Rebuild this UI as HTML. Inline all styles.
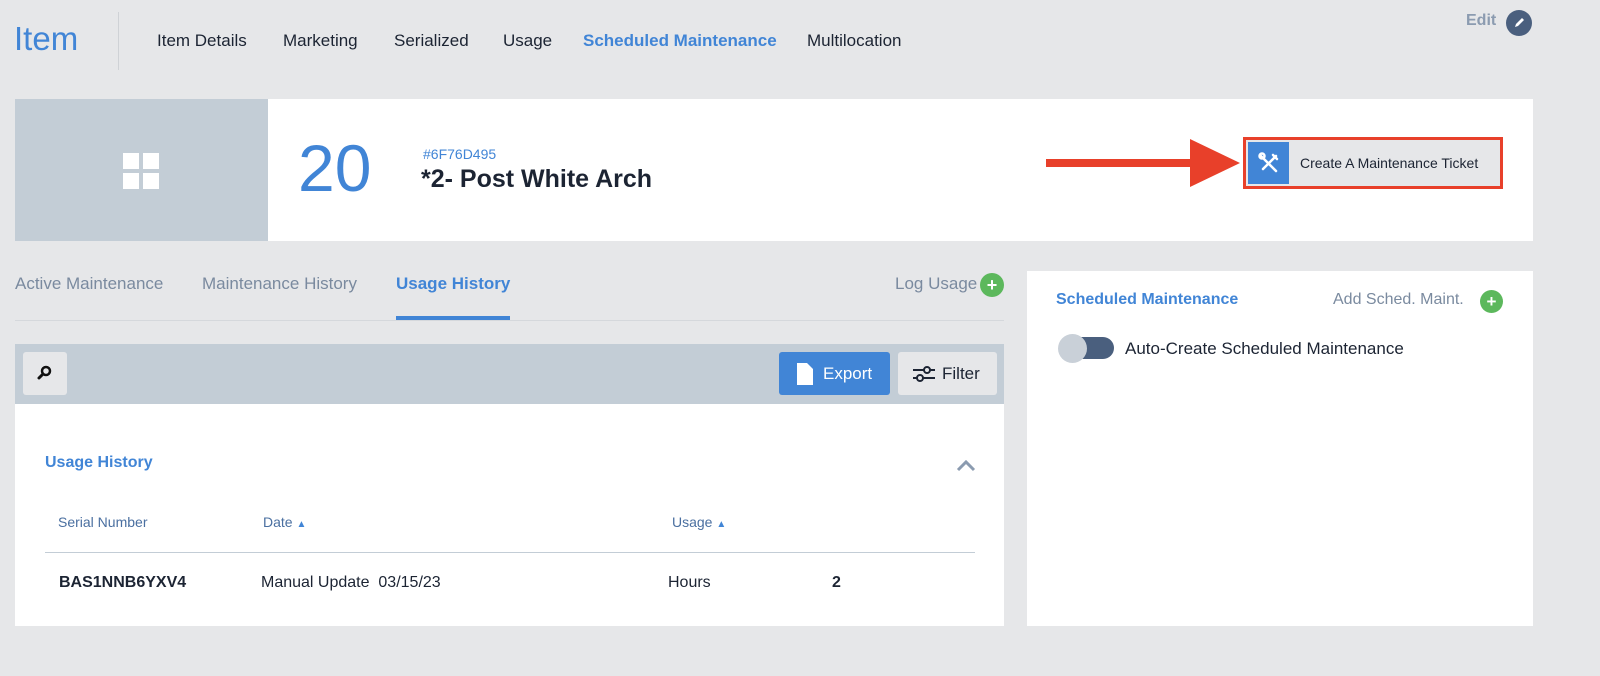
<!DOCTYPE html>
<html><head><style>
*{box-sizing:border-box;margin:0;padding:0}
body{width:1600px;height:676px;background:#e6e7e9;font-family:"Liberation Sans",sans-serif;position:relative;overflow:hidden;color:#1c2433}
.a{position:absolute;white-space:nowrap}
</style></head><body>
<div class="a" style="left:14px;top:20px;font-size:33px;color:#4185d6">Item</div>
<div class="a" style="left:118px;top:12px;width:1px;height:58px;background:#cfd2d6"></div>
<div class="a" style="left:157px;top:31px;font-size:17px">Item Details</div>
<div class="a" style="left:283px;top:31px;font-size:17px">Marketing</div>
<div class="a" style="left:394px;top:31px;font-size:17px">Serialized</div>
<div class="a" style="left:503px;top:31px;font-size:17px">Usage</div>
<div class="a" style="left:583px;top:31px;font-size:17px;color:#4185d6;font-weight:bold">Scheduled Maintenance</div>
<div class="a" style="left:807px;top:31px;font-size:17px">Multilocation</div>
<div class="a" style="left:1466px;top:12px;font-size:16px;color:#8b9bb0;font-weight:bold">Edit</div>
<div class="a" style="left:1506px;top:10px;width:26px;height:26px;border-radius:50%;background:#4a5f7e"><svg width="26" height="26"><path d="M9 17l1-3 6-6 2 2-6 6z" fill="#fff"/></svg></div>

<div class="a" style="left:15px;top:99px;width:1518px;height:142px;background:#fff"></div>
<div class="a" style="left:15px;top:99px;width:253px;height:142px;background:#c3cdd6"></div>
<div class="a" style="left:123px;top:153px;width:16px;height:16px;background:#fff"></div>
<div class="a" style="left:143px;top:153px;width:16px;height:16px;background:#fff"></div>
<div class="a" style="left:123px;top:173px;width:16px;height:16px;background:#fff"></div>
<div class="a" style="left:143px;top:173px;width:16px;height:16px;background:#fff"></div>
<div class="a" style="left:298px;top:130px;font-size:66px;color:#4185d6;line-height:76px">20</div>
<div class="a" style="left:423px;top:146px;font-size:14px;color:#4185d6">#6F76D495</div>
<div class="a" style="left:421px;top:165px;font-size:25px;font-weight:bold">*2- Post White Arch</div>
<div class="a" style="left:1046px;top:159px;width:150px;height:8px;background:#e8402a"></div>
<div class="a" style="left:1190px;top:139px;width:0;height:0;border-top:24px solid transparent;border-bottom:24px solid transparent;border-left:50px solid #e8402a"></div>
<div class="a" style="left:1243px;top:137px;width:260px;height:52px;border:3px solid #e8402a;background:#e6e7e9"></div>
<div class="a" style="left:1248px;top:142px;width:41px;height:42px;background:#4185d6"><svg width="41" height="42"><g stroke="#fff" stroke-width="2.5" stroke-linecap="round" fill="none"><path d="M13 14l15 15"/><path d="M28 14l-13 13"/><circle cx="14" cy="14" r="2.5"/><path d="M25 13l4 4"/></g></svg></div>
<div class="a" style="left:1300px;top:155px;font-size:14px">Create A Maintenance Ticket</div>

<div class="a" style="left:15px;top:274px;font-size:17px;color:#7a8a9f">Active Maintenance</div>
<div class="a" style="left:202px;top:274px;font-size:17px;color:#7a8a9f">Maintenance History</div>
<div class="a" style="left:396px;top:274px;font-size:17px;color:#4185d6;font-weight:bold">Usage History</div>
<div class="a" style="left:396px;top:316px;width:114px;height:4px;background:#4185d6"></div>
<div class="a" style="left:15px;top:320px;width:989px;height:1px;background:#d5d8dc"></div>
<div class="a" style="left:895px;top:274px;font-size:17px;color:#7a8a9f">Log Usage</div>
<div class="a" style="left:980px;top:273px;width:24px;height:24px;border-radius:50%;background:#5cb85c;color:#fff;text-align:center;font-weight:bold;line-height:24px;font-size:18px">+</div>

<div class="a" style="left:15px;top:344px;width:989px;height:60px;background:#c3cdd6"></div>
<div class="a" style="left:23px;top:352px;width:44px;height:43px;background:#e6e7e9;border-radius:3px"><svg width="44" height="43"><circle cx="23" cy="19" r="4" stroke="#111" stroke-width="2.5" fill="none"/><path d="M20 22l-4 4" stroke="#111" stroke-width="3" stroke-linecap="round"/></svg></div>
<div class="a" style="left:779px;top:352px;width:111px;height:43px;background:#4185d6;border-radius:3px;color:#fff;font-size:17px;line-height:43px;padding-left:44px">Export</div>
<svg class="a" style="left:797px;top:363px" width="16" height="22"><path d="M0 0h10l6 6v16H0z" fill="#fff"/></svg>
<div class="a" style="left:898px;top:352px;width:99px;height:43px;background:#e6e7e9;border-radius:3px;font-size:17px;line-height:43px;padding-left:44px">Filter</div>
<svg class="a" style="left:912px;top:364px" width="24" height="20"><g stroke="#1c2433" stroke-width="2" fill="#e6e7e9"><path d="M1 6h22M1 14h22"/><circle cx="15" cy="6" r="3"/><circle cx="8" cy="14" r="3"/></g></svg>

<div class="a" style="left:15px;top:404px;width:989px;height:222px;background:#fff"></div>
<div class="a" style="left:45px;top:454px;font-size:16px;color:#4185d6;font-weight:bold">Usage History</div>
<svg class="a" style="left:956px;top:459px" width="20" height="14"><path d="M2 11l8-8 8 8" stroke="#8b9bb0" stroke-width="3" fill="none"/></svg>
<div class="a" style="left:58px;top:514px;font-size:14px;color:#4a6fa0">Serial Number</div>
<div class="a" style="left:263px;top:514px;font-size:14px;color:#4a6fa0">Date <span style="font-size:10px;color:#4185d6">▲</span></div>
<div class="a" style="left:672px;top:514px;font-size:14px;color:#4a6fa0">Usage <span style="font-size:10px;color:#4185d6">▲</span></div>
<div class="a" style="left:45px;top:552px;width:930px;height:1px;background:#c3cdd6"></div>
<div class="a" style="left:59px;top:574px;font-size:16px;font-weight:bold">BAS1NNB6YXV4</div>
<div class="a" style="left:261px;top:574px;font-size:16px">Manual Update&nbsp; 03/15/23</div>
<div class="a" style="left:668px;top:574px;font-size:16px">Hours</div>
<div class="a" style="left:832px;top:574px;font-size:16px;font-weight:bold">2</div>

<div class="a" style="left:1027px;top:271px;width:506px;height:355px;background:#fff"></div>
<div class="a" style="left:1056px;top:291px;font-size:16px;color:#4185d6;font-weight:bold">Scheduled Maintenance</div>
<div class="a" style="left:1333px;top:291px;font-size:16px;color:#7a8a9f">Add Sched. Maint.</div>
<div class="a" style="left:1480px;top:290px;width:23px;height:23px;border-radius:50%;background:#5cb85c;color:#fff;text-align:center;font-weight:bold;line-height:23px;font-size:17px">+</div>
<div class="a" style="left:1062px;top:337px;width:52px;height:22px;border-radius:11px;background:#4a5f7e"></div>
<div class="a" style="left:1058px;top:334px;width:29px;height:29px;border-radius:50%;background:#c9d0d8"></div>
<div class="a" style="left:1125px;top:339px;font-size:17px">Auto-Create Scheduled Maintenance</div>
</body></html>
